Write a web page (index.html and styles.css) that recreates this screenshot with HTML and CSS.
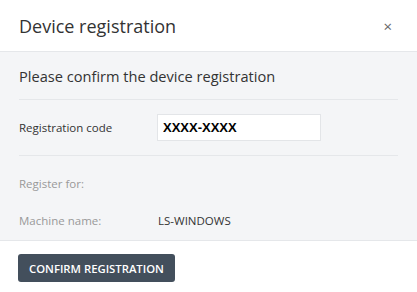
FILE: index.html
```html
<!DOCTYPE html>
<html lang="en">
<head>
    <meta charset="UTF-8">
    <meta name="viewport" content="width=device-width, initial-scale=1.0">
    <title>Device registration</title>
    <link rel="stylesheet" href="styles.css">
</head>
<body>
    <div class="modal">
        <div class="modal-header">
            <div class="modal-title">Device registration</div>
            <button class="close" aria-label="Close">&times;</button>
        </div>
        <div class="modal-body">
            <div class="intro">Please confirm the device registration</div>
            <div class="row code-row">
                <label for="code">Registration code</label>
                <input type="text" id="code" value="XXXX-XXXX">
            </div>
            <div class="row muted">Register for:</div>
            <div class="row info-row">
                <span class="muted">Machine name:</span>
                <span class="value">LS-WINDOWS</span>
            </div>
        </div>
        <div class="modal-footer">
            <button class="btn-confirm">CONFIRM REGISTRATION</button>
        </div>
    </div>
</body>
</html>
```

FILE: styles.css
```css
body {
    margin: 0;
    font-family: 'Open Sans', sans-serif;
    color: #333;
    background-color: #fff;
}
.modal {
    display: flex;
    flex-direction: column;
}
.modal-header {
    height: 51px;
    flex-shrink: 0;
    display: flex;
    align-items: center;
    justify-content: space-between;
    padding: 0 19px;
    border-bottom: 1px solid #e5e7ea;
}
.modal-title {
    font-size: 18px;
    color: #333;
}
.close {
    border: none;
    background: none;
    font-size: 15px;
    color: #666;
    padding: 0 6px 0 0;
    cursor: pointer;
    font-family: 'Open Sans', sans-serif;
}
.modal-body {
    background-color: #f4f5f7;
    padding: 0 19px;
    height: 188px;
    flex-shrink: 0;
    border-bottom: 1px solid #e5e7ea;
}
.intro {
    font-size: 14.6px;
    padding: 14px 0 13px;
    border-bottom: 1px solid #e5e7ea;
}
.row {
    font-size: 11.5px;
}
.code-row {
    display: flex;
    align-items: center;
    height: 55px;
    border-bottom: 1px solid #e5e7ea;
}
.code-row label {
    width: 138px;
}
.code-row input {
    width: 152px;
    height: 25px;
    border: 1px solid #e3e5e8;
    padding: 0 5px;
    font-family: 'Liberation Sans', Arial, sans-serif;
    font-weight: bold;
    font-size: 13px;
    color: #000;
    outline: none;
}
.muted {
    color: #999;
}
.row.muted {
    padding-top: 20px;
    height: 37px;
}
.info-row {
    display: flex;
}
.info-row .muted {
    width: 139px;
}
.value {
    color: #333;
}
.modal-footer {
    padding: 13px 18px;
}
.btn-confirm {
    background-color: #434f5c;
    color: #fff;
    border: none;
    border-radius: 3px;
    height: 28px;
    padding: 0 11px;
    font-family: 'Open Sans', sans-serif;
    font-weight: 600;
    font-size: 11.3px;
    cursor: pointer;
}
```
